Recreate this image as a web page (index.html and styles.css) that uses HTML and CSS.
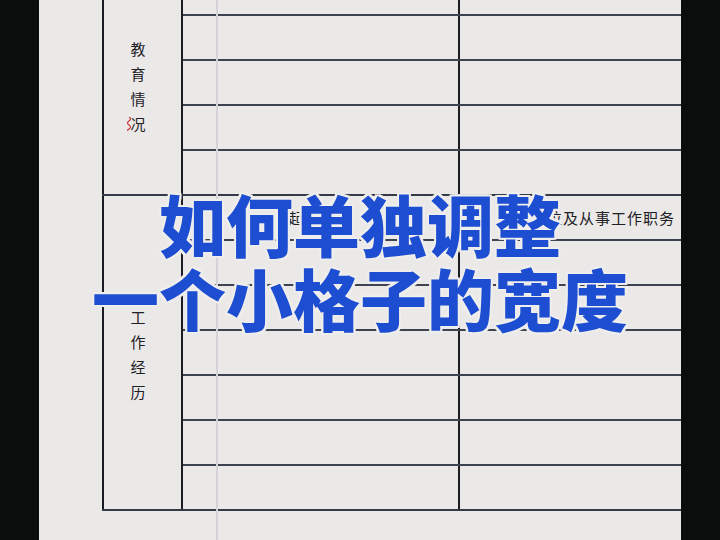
FILE: index.html
```html
<!DOCTYPE html>
<html lang="zh-CN">
<head>
<meta charset="utf-8">
<title>如何单独调整一个小格子的宽度</title>
<link rel="stylesheet" href="styles.css">
</head>
<body>
<div class="screen">
  <div class="side"></div>
  <div class="page">
    <div class="table">
      <div class="section">
        <div class="label edu">
          <span>教</span><span>育</span><span>情</span><span class="typo">况<svg class="squiggle" viewBox="0 0 6 14" width="6" height="14"><path d="M3 0 Q6 2 3 4 Q0 6 3 8 Q6 10 3 12 Q1 13 2 14" fill="none" stroke="#c8303c" stroke-width="1.2"/></svg></span>
        </div>
        <div class="rows">
          <div class="row first"><div class="c2"></div><div class="c3"></div></div>
          <div class="row"><div class="c2"></div><div class="c3"></div></div>
          <div class="row"><div class="c2"></div><div class="c3"></div></div>
          <div class="row"><div class="c2"></div><div class="c3"></div></div>
          <div class="row last"><div class="c2"></div><div class="c3"></div></div>
        </div>
      </div>
      <div class="section">
        <div class="label work">
          <span>工</span><span>作</span><span>经</span><span>历</span>
        </div>
        <div class="rows">
          <div class="row"><div class="c2 head">起止年月</div><div class="c3 head left">所在单位及从事工作职务（职称）</div></div>
          <div class="row"><div class="c2"></div><div class="c3"></div></div>
          <div class="row"><div class="c2"></div><div class="c3"></div></div>
          <div class="row"><div class="c2"></div><div class="c3"></div></div>
          <div class="row"><div class="c2"></div><div class="c3"></div></div>
          <div class="row"><div class="c2"></div><div class="c3"></div></div>
          <div class="row last"><div class="c2"></div><div class="c3"></div></div>
        </div>
      </div>
    </div>
    <div class="guide"></div>
    <div class="title">如何单独调整<br>一个小格子的宽度</div>
  </div>
  <div class="side"></div>
</div>
</body>
</html>
```
FILE: styles.css
```css
* { box-sizing: border-box; }
html, body { margin: 0; padding: 0; }
body {
  width: 720px;
  height: 540px;
  overflow: hidden;
  background: #0b0d0d;
  font-family: "Noto Sans CJK SC", "Noto Sans", sans-serif;
}
.screen {
  display: flex;
  width: 720px;
  height: 540px;
}
.side {
  width: 39px;
  flex: none;
  background: #0b0d0d;
}
.page {
  position: relative;
  width: 642px;
  flex: none;
  height: 540px;
  background: #eae9e7;
  overflow: hidden;
}
.table {
  margin-left: 63px;
  width: 720px;
  display: flex;
  flex-direction: column;
}
.section {
  display: flex;
  border-bottom: 2px solid #343a46;
}
.label {
  width: 81px;
  flex: none;
  border-left: 2px solid #1c1d24;
  border-right: 2px solid #1c1d24;
  display: flex;
  flex-direction: column;
  align-items: center;
  padding-right: 9px;
  font-size: 15px;
  line-height: 25px;
  color: #1e2026;
}
.label.edu { padding-top: 36px; }
.label.work { justify-content: center; padding-top: 2px; }
.typo { position: relative; }
.squiggle {
  position: absolute;
  left: -4px;
  top: 6px;
}
.rows {
  flex: 1;
  display: flex;
  flex-direction: column;
}
.row {
  display: flex;
  height: 45px;
  border-bottom: 2px solid #3d4350;
}
.row.first { height: 16px; }
.row.last { height: 43px; border-bottom: none; }
.c2 {
  width: 277px;
  flex: none;
  border-right: 2px solid #1c1d24;
}
.c3 { flex: 1; }
.head {
  display: flex;
  align-items: center;
  justify-content: center;
  font-size: 15px;
  letter-spacing: 1px;
  color: #1e2026;
  white-space: nowrap;
}
.head.left {
  justify-content: flex-start;
  padding-left: 39px;
}
.guide {
  position: absolute;
  left: 177px;
  top: 0;
  width: 2px;
  height: 540px;
  background: #d6d3d8;
}
.title {
  position: absolute;
  left: 0;
  right: 0;
  top: 186px;
  text-align: center;
  font-family: "Noto Sans CJK SC", "Noto Sans", sans-serif;
  font-weight: 900;
  font-size: 67px;
  line-height: 74px;
  color: #1d4dd0;
  white-space: nowrap;
  text-shadow:
    0 0 2px #f4f3f2,
    2px 0 0 #eeedec, -2px 0 0 #eeedec, 0 2px 0 #eeedec, 0 -2px 0 #eeedec,
    2px 2px 0 #eeedec, -2px -2px 0 #eeedec, 2px -2px 0 #eeedec, -2px 2px 0 #eeedec;
}
```
